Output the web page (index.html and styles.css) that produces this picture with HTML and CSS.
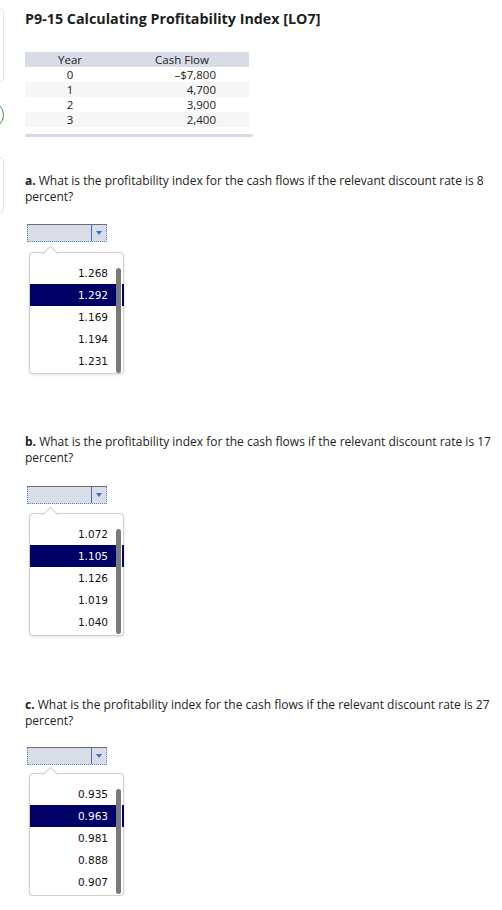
FILE: index.html
```html
<!DOCTYPE html>
<html>
<head>
<meta charset="utf-8">
<link rel="stylesheet" href="styles.css">
</head>
<body>
<div class="gutter">
  <div class="gcard gcard1"></div>
  <div class="gcircle"></div>
  <div class="gcard gcard2"></div>
</div>
<main class="page">
  <h1 class="title">P9-15 Calculating Profitability Index [LO7]</h1>
  <div class="tablewrap">
    <table class="cf">
      <thead><tr><th class="c-year">Year</th><th class="c-cash">Cash Flow</th></tr></thead>
      <tbody>
        <tr><td class="c-year">0</td><td class="c-cash">–$7,800</td></tr>
        <tr class="alt"><td class="c-year">1</td><td class="c-cash">4,700</td></tr>
        <tr><td class="c-year">2</td><td class="c-cash">3,900</td></tr>
        <tr class="alt"><td class="c-year">3</td><td class="c-cash">2,400</td></tr>
      </tbody>
    </table>
    <div class="tbar"></div>
  </div>

  <section class="q q-a">
    <p class="qtext"><b>a.</b> What is the profitability index for the cash flows if the relevant discount rate is 8 percent?</p>
    <div class="sel"><span class="sel-field"></span><span class="sel-btn"><span class="arrow"></span></span></div>
    <div class="pop">
      <ul class="opts">
        <li>1.268</li><li class="on">1.292</li><li>1.169</li><li>1.194</li><li>1.231</li>
      </ul>
      <div class="sb"></div>
    </div>
  </section>

  <section class="q q-b">
    <p class="qtext"><b>b.</b> What is the profitability index for the cash flows if the relevant discount rate is 17 percent?</p>
    <div class="sel"><span class="sel-field"></span><span class="sel-btn"><span class="arrow"></span></span></div>
    <div class="pop">
      <ul class="opts">
        <li>1.072</li><li class="on">1.105</li><li>1.126</li><li>1.019</li><li>1.040</li>
      </ul>
      <div class="sb"></div>
    </div>
  </section>

  <section class="q q-c">
    <p class="qtext"><b>c.</b> What is the profitability index for the cash flows if the relevant discount rate is 27 percent?</p>
    <div class="sel"><span class="sel-field"></span><span class="sel-btn"><span class="arrow"></span></span></div>
    <div class="pop">
      <ul class="opts">
        <li>0.935</li><li class="on">0.963</li><li>0.981</li><li>0.888</li><li>0.907</li>
      </ul>
      <div class="sb"></div>
    </div>
  </section>
</main>
</body>
</html>
```
FILE: styles.css
```css
html, body {
  margin: 0;
  padding: 0;
  background: #fff;
}
body {
  font-family: "Open Sans", Lato, "Liberation Sans", sans-serif;
  color: #222;
  position: relative;
  width: 502px;
  overflow: hidden;
}
.gutter {
  position: absolute;
  left: 0;
  top: 0;
  width: 4px;
  height: 230px;
}
.gcard {
  position: absolute;
  right: 0;
  width: 20px;
  border: 1px solid #e3e3e3;
  border-radius: 4px;
  background: #fff;
}
.gcard1 { top: 8px; height: 72px; }
.gcard2 { top: 157px; height: 54px; }
.gcircle {
  position: absolute;
  right: 0;
  top: 101px;
  width: 26px;
  height: 26px;
  border: 1.5px solid #3f9a3f;
  border-radius: 50%;
}
.page {
  padding: 0 0 0 25px;
}
.title {
  margin: 0;
  padding-top: 9px;
  font-size: 14.3px;
  line-height: 20px;
  font-weight: 700;
  color: #1e1e1e;
}
.tablewrap {
  margin-top: 23px;
  width: 228px;
}
.cf {
  border-collapse: collapse;
  width: 224px;
  font-size: 11.5px;
  color: #222;
}
.cf th, .cf td {
  padding: 0;
  height: 15px;
  line-height: 15px;
  font-weight: 400;
}
.cf thead th {
  background: #d8dce6;
}
.cf .c-year { width: 90px; text-align: center; }
.cf td.c-cash { text-align: right; padding-right: 33px; }
.cf th.c-cash { text-align: center; }
.cf tr.alt td { background: #f6f6f6; }
.tbar {
  margin-top: 7px;
  height: 3px;
  width: 228px;
  background: #d5d9e3;
  border-radius: 2px;
}
.q { position: relative; }
.qtext {
  margin: 0;
  font-size: 12px;
  line-height: 16.4px;
  color: #222;
  width: 477px;
}
.qtext b { font-weight: 700; }
.q-a { padding-top: 36px; }
.q-b { padding-top: 60px; }
.q-c { padding-top: 61px; }
.sel {
  margin: 18px 0 0 2px;
  width: 80px;
  height: 18px;
  display: flex;
  box-sizing: border-box;
  background: #d9dde7;
  border: 1px dotted #5b86cf;
  border-top: 1px solid #6e6e6e;
}
.q-b .sel { margin-top: 19px; }
.sel-field { flex: 1; }
.sel-btn {
  width: 14px;
  border-left: 1px solid #3d6fc3;
  display: flex;
  align-items: center;
  justify-content: center;
}
.arrow {
  width: 0;
  height: 0;
  border-left: 3.5px solid transparent;
  border-right: 3.5px solid transparent;
  border-top: 4px solid #3d6fc3;
}
.pop {
  position: relative;
  margin: 8px 0 0 4px;
  width: 95px;
  height: 123px;
  box-sizing: border-box;
  border: 1px solid #cfcfcf;
  border-radius: 4px;
  background: #fff;
  box-shadow: 0 1px 3px rgba(0,0,0,0.12);
}
.q-a .pop { margin-top: 10px; height: 122px; }
.q-b .pop { margin-top: 9px; }
.pop::before {
  content: "";
  position: absolute;
  left: 15px;
  top: -7px;
  width: 10px;
  height: 10px;
  background: #fff;
  border-left: 1px solid #cfcfcf;
  border-top: 1px solid #cfcfcf;
  transform: translateY(2px) rotate(45deg);
}
.opts {
  list-style: none;
  margin: 0;
  padding: 9px 0 0 0;
  font-family: "DejaVu Sans", Verdana, sans-serif;
  font-size: 10.5px;
  color: #111;
}
.opts li {
  height: 22px;
  line-height: 22px;
  text-align: right;
  padding-right: 8px;
  width: 86px;
  box-sizing: border-box;
}
.opts li.on {
  background: #000066;
  color: #fff;
  position: relative;
}
.opts li.on::after {
  content: "";
  position: absolute;
  left: 92px;
  top: 0;
  width: 2px;
  height: 22px;
  background: #000066;
}
.sb {
  position: absolute;
  left: 86px;
  top: 15px;
  width: 5px;
  height: 105px;
  background: #7a7a7a;
  border-radius: 3px;
}
```
